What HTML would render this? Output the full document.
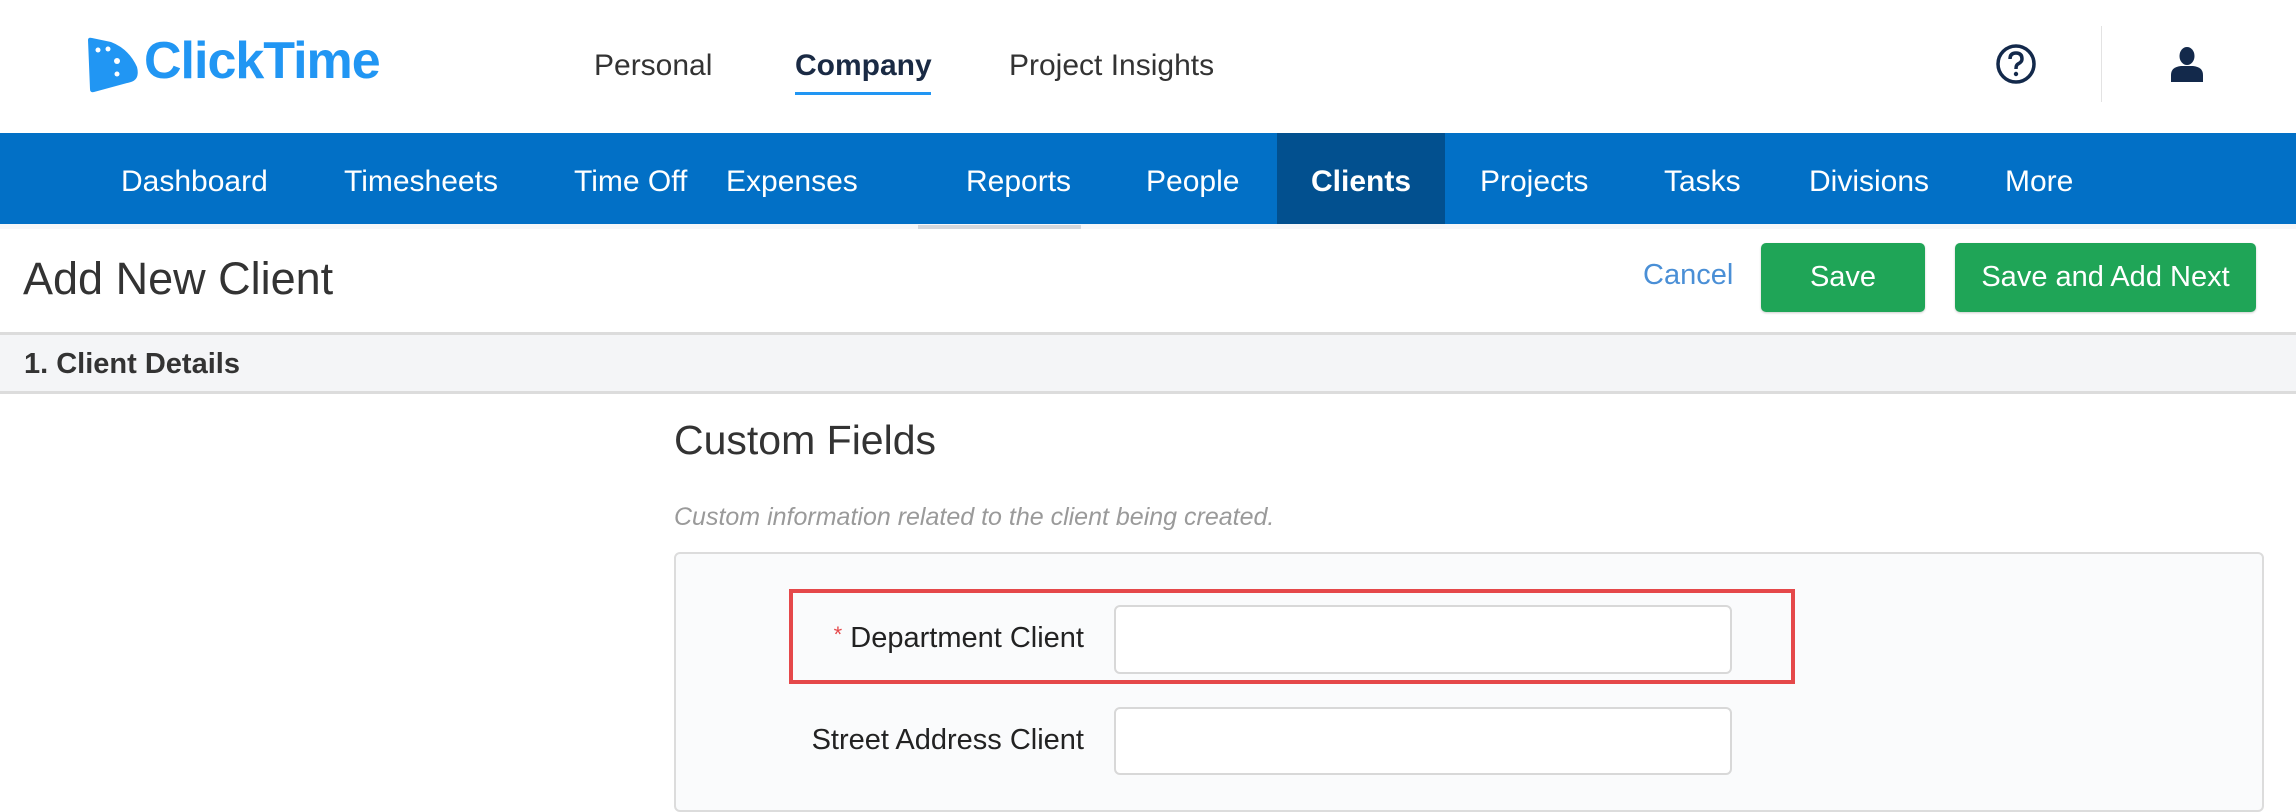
<!DOCTYPE html>
<html><head><meta charset="utf-8"><style>
*{margin:0;padding:0;box-sizing:border-box}
body{width:2296px;height:787px;overflow:hidden;background:#fff;font-family:"Liberation Sans",sans-serif;position:relative}
.a{position:absolute;white-space:nowrap}
.top{font-size:30px;color:#333;top:49px}
.nav{position:absolute;top:133px;left:0;width:2296px;height:91px;background:#0270c6}
.nav span{position:absolute;top:32px;font-size:30px;color:#fff;line-height:34px}
.btn{position:absolute;top:243px;height:69px;background:#1fa557;border-radius:5px;color:#fff;font-size:29px;line-height:69px;text-align:center;box-shadow:0 1px 2px rgba(0,0,0,.2)}
</style></head><body>
<svg class="a" style="left:85px;top:37px" width="56" height="56" viewBox="0 0 56 56"><path d="M3 3 Q3 0 7 1 L26 5 Q44 12 52 30 Q55 42 46 45 L9 55 Q5 56 5 52 Z" fill="#2196f3"/><circle cx="13" cy="13" r="2.5" fill="#fff"/><circle cx="23" cy="12" r="2.5" fill="#fff"/><circle cx="32" cy="24" r="3" fill="#fff"/><circle cx="32" cy="37" r="2.5" fill="#fff"/></svg>
<div class="a" style="left:144px;top:31px;font-size:52px;font-weight:bold;color:#2196f3;letter-spacing:-1px">ClickTime</div>
<div class="a top" style="left:594px">Personal</div>
<div class="a top" style="left:795px;font-weight:bold;color:#1a2a44">Company</div>
<div class="a" style="left:795px;top:92px;width:136px;height:3px;background:#2196f3"></div>
<div class="a top" style="left:1009px">Project Insights</div>
<svg class="a" style="left:1995px;top:43px" width="42" height="42" viewBox="0 0 42 42"><circle cx="21" cy="21" r="18" fill="none" stroke="#13294b" stroke-width="3.5"/><path d="M15 16 Q15 10 21 10 Q27 10 27 16 Q27 19 23 21 Q21 22 21 26" fill="none" stroke="#13294b" stroke-width="3.5"/><circle cx="21" cy="31" r="2.2" fill="#13294b"/></svg>
<div class="a" style="left:2101px;top:26px;width:1px;height:76px;background:#e3e3e3"></div>
<svg class="a" style="left:2169px;top:46px" width="36" height="36" viewBox="0 0 36 36"><ellipse cx="18" cy="10" rx="7.5" ry="9" fill="#13294b"/><path d="M2 36 L2 29 Q2 21 12 20 L24 20 Q34 21 34 29 L34 36 Z" fill="#13294b"/></svg>
<div class="nav">
<div style="position:absolute;left:1277px;top:0;width:168px;height:91px;background:#02508f"></div>
<span style="left:121px">Dashboard</span>
<span style="left:344px">Timesheets</span>
<span style="left:574px">Time Off</span>
<span style="left:726px">Expenses</span>
<span style="left:966px">Reports</span>
<span style="left:1146px">People</span>
<span style="left:1311px;font-weight:bold">Clients</span>
<span style="left:1480px">Projects</span>
<span style="left:1664px">Tasks</span>
<span style="left:1809px">Divisions</span>
<span style="left:2005px">More</span>
</div>
<div class="a" style="left:0;top:224px;width:2296px;height:5px;background:#f6f7f9"></div>
<div class="a" style="left:918px;top:225px;width:163px;height:4px;background:#d4d7dc"></div>
<div class="a" style="left:23px;top:253px;font-size:45px;color:#333">Add New Client</div>
<div class="a" style="left:1643px;top:259px;font-size:29px;color:#4a8fd6">Cancel</div>
<div class="btn" style="left:1761px;width:164px">Save</div>
<div class="btn" style="left:1955px;width:301px">Save and Add Next</div>
<div class="a" style="left:0;top:332px;width:2296px;height:62px;background:#f4f5f7;border-top:3px solid #dcdcdc;border-bottom:3px solid #dcdcdc"></div>
<div class="a" style="left:24px;top:348px;font-size:29px;font-weight:bold;color:#333">1. Client Details</div>
<div class="a" style="left:674px;top:417px;font-size:41px;color:#333">Custom Fields</div>
<div class="a" style="left:674px;top:503px;font-size:25px;font-style:italic;color:#9a9a9a">Custom information related to the client being created.</div>
<div class="a" style="left:674px;top:552px;width:1590px;height:260px;background:#fafbfc;border:2px solid #dcdcdc;border-radius:6px"></div>
<div class="a" style="left:789px;top:589px;width:1006px;height:95px;border:4px solid #e5484a"></div>
<div class="a" style="left:828px;top:622px;font-size:29px;color:#222;width:256px;text-align:right"><span style="color:#e5484a;font-size:22px;vertical-align:5px">*</span> Department Client</div>
<div class="a" style="left:1114px;top:605px;width:618px;height:69px;background:#fff;border:2px solid #d8d8d8;border-radius:6px"></div>
<div class="a" style="left:780px;top:724px;font-size:29px;color:#222;width:304px;text-align:right">Street Address Client</div>
<div class="a" style="left:1114px;top:707px;width:618px;height:68px;background:#fff;border:2px solid #d8d8d8;border-radius:6px"></div>
</body></html>
